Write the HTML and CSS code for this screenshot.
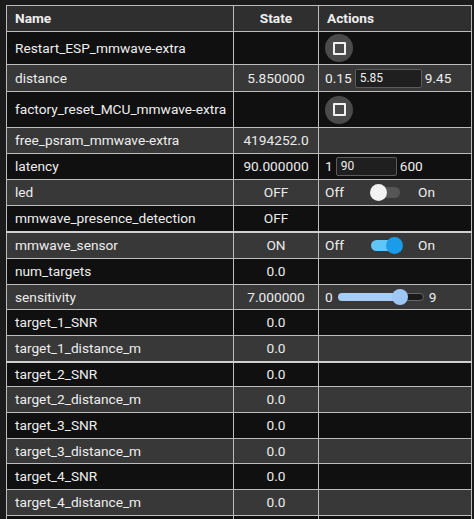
FILE: index.html
```
<!DOCTYPE html>
<html>
<head>
<meta charset="utf-8">
<link rel="stylesheet" href="styles.css">
</head>
<body>
<table class="grid">
  <colgroup><col class="c-name"><col class="c-state"><col class="c-act"></colgroup>
  <thead>
    <tr class="hdr"><th class="l">Name</th><th>State</th><th class="l">Actions</th></tr>
  </thead>
  <tbody>
    <tr class="dark h33"><td>Restart_ESP_mmwave-extra</td><td class="st"></td><td class="act"><span class="btn"><span class="sq"></span></span></td></tr>
    <tr class="lite h27"><td>distance</td><td class="st">5.850000</td><td class="act"><span class="row">0.15 <span class="inp w67">5.85</span> 9.45</span></td></tr>
    <tr class="dark h36"><td>factory_reset_MCU_mmwave-extra</td><td class="st"></td><td class="act"><span class="btn"><span class="sq"></span></span></td></tr>
    <tr class="lite"><td>free_psram_mmwave-extra</td><td class="st">4194252.0</td><td></td></tr>
    <tr class="dark"><td>latency</td><td class="st">90.000000</td><td class="act"><span class="row">1 <span class="inp w61">90</span> 600</span></td></tr>
    <tr class="lite"><td>led</td><td class="st">OFF</td><td class="act"><span class="row"><span class="lbl">Off</span><span class="sw off"><span class="knob"></span></span><span>On</span></span></td></tr>
    <tr class="dark"><td>mmwave_presence_detection</td><td class="st">OFF</td><td></td></tr>
    <tr class="lite h27 thick"><td>mmwave_sensor</td><td class="st">ON</td><td class="act"><span class="row"><span class="lbl">Off</span><span class="sw on"><span class="knob"></span></span><span>On</span></span></td></tr>
    <tr class="dark"><td>num_targets</td><td class="st">0.0</td><td></td></tr>
    <tr class="lite h25"><td>sensitivity</td><td class="st">7.000000</td><td class="act"><span class="row">0 <span class="rng"><span class="fill"></span><span class="thumb"></span></span> 9</span></td></tr>
    <tr class="dark"><td>target_1_SNR</td><td class="st">0.0</td><td></td></tr>
    <tr class="lite"><td>target_1_distance_m</td><td class="st">0.0</td><td></td></tr>
    <tr class="dark h25 thick"><td>target_2_SNR</td><td class="st">0.0</td><td></td></tr>
    <tr class="lite"><td>target_2_distance_m</td><td class="st">0.0</td><td></td></tr>
    <tr class="dark"><td>target_3_SNR</td><td class="st">0.0</td><td></td></tr>
    <tr class="lite h25"><td>target_3_distance_m</td><td class="st">0.0</td><td></td></tr>
    <tr class="dark"><td>target_4_SNR</td><td class="st">0.0</td><td></td></tr>
    <tr class="lite"><td>target_4_distance_m</td><td class="st">0.0</td><td></td></tr>
    <tr class="dark"><td></td><td class="st"></td><td></td></tr>
  </tbody>
</table>
</body>
</html>
```
FILE: styles.css
```
html, body { margin: 0; padding: 0; }
body {
  background: #1b1b1b;
  padding: 5px 0 0 6px;
  font-family: "Roboto", "Noto Sans", sans-serif;
  font-size: 13.7px;
  color: #eeeeee;
  overflow: hidden;
  height: 519px;
  box-sizing: border-box;
}
.grid {
  border-collapse: collapse;
  table-layout: fixed;
  width: 465px;
}
.c-name { width: 227px; }
.c-state { width: 85px; }
.c-act { width: 153px; }
.grid th, .grid td {
  border: 1px solid #bdbdbd;
  padding: 0 8px;
  height: 26px;
  line-height: 17px;
  white-space: nowrap;
  overflow: hidden;
  box-sizing: border-box;
}
.grid th { font-weight: bold; text-align: center; background: #2f2f2f; }
.grid th.l { text-align: left; }
.grid td.st { text-align: center; color: #ebebeb; }
.grid td.act { padding: 0 6px; }
.lite td { background: #383838; }
.dark td { background: #101010; }
.h33 td { height: 33px; }
.h36 td { height: 36px; }
.h27 td { height: 27px; }
.h25 td { height: 25px; }
.thick td { border-top: 2px solid #d0d0d0; }
.row { display: flex; align-items: center; gap: 3px; }
.btn {
  display: inline-flex; align-items: center; justify-content: center;
  width: 28px; height: 28px; border-radius: 50%;
  background: #4a4a4a;
}
.sq { width: 9px; height: 9px; border: 2px solid #f2f2f2; border-radius: 1px; }
.inp {
  display: inline-block; height: 19px; box-sizing: border-box;
  background: #1f1f1f; border: 1px solid #5c5c5c; border-radius: 2px;
  font-size: 12px; line-height: 17px; padding: 0 4px; color: #eee;
}
.w67 { width: 67px; }
.w61 { width: 61px; }
.lbl { width: 43px; }
.sw {
  position: relative; display: inline-block;
  width: 29px; height: 11px; border-radius: 6px; margin-right: 15px;
}
.sw.off { background: #555; }
.sw.on { background: #5fc6f7; }
.knob {
  position: absolute; top: -3px; width: 17px; height: 17px; border-radius: 50%;
}
.sw.off .knob { left: -1px; background: #f2f2f2; }
.sw.on .knob { right: -3px; background: #1a9ce9; }
.rng {
  position: relative; display: inline-block;
  width: 84px; height: 6px; border-radius: 4px;
  background: #1a1a1a; border: 1px solid #666; margin: 0 2px;
}
.fill { position: absolute; left: -1px; top: -1px; height: 8px; width: 62px; background: #a6ccf7; border-radius: 4px; }
.thumb { position: absolute; left: 53px; top: -5px; width: 16px; height: 16px; border-radius: 50%; background: #9fc7f5; }
```
